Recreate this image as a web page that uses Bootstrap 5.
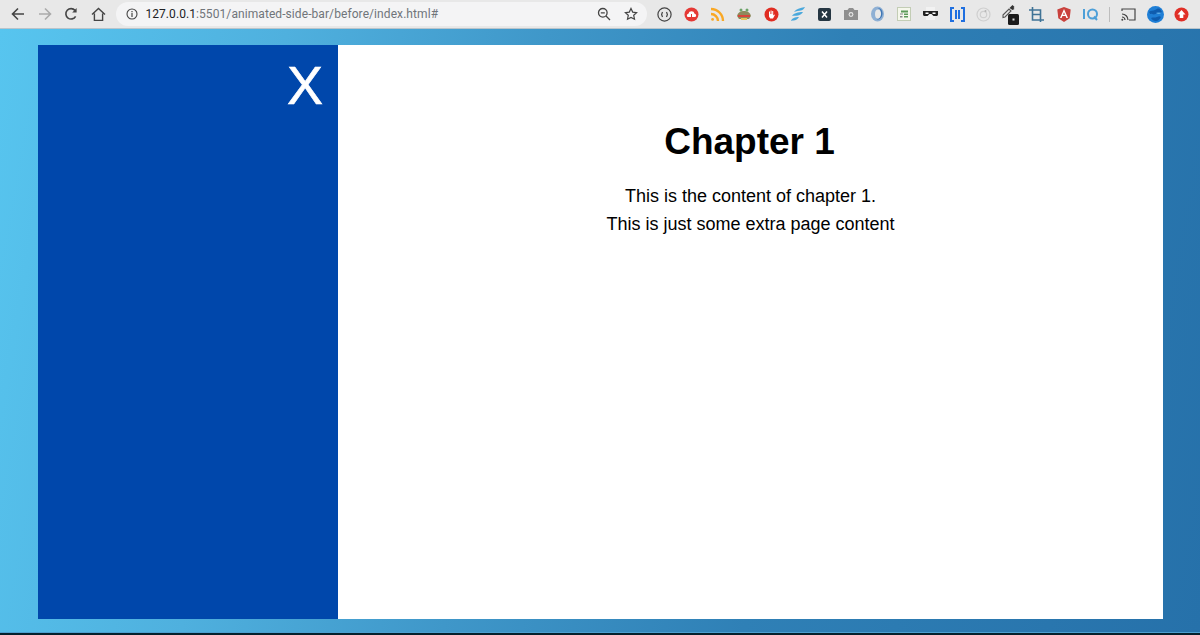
<!DOCTYPE html>
<html lang="en">

<head>
    <meta charset="UTF-8" />
    <meta name="viewport" content="width=device-width, initial-scale=1" />
    <title>Animated side bar</title>
    <link href="https://cdn.jsdelivr.net/npm/bootstrap@5.3.3/dist/css/bootstrap.min.css" rel="stylesheet" />
    <style>
        html,
        body {
            height: 635px;
            overflow: hidden;
        }

        body {
            font-family: "Liberation Sans", Arial, sans-serif;
            background: #04202c;
        }

        .chrome-bar {
            height: 29px;
            background: #e8e8e8;
            border-bottom: 1px solid #b9c4cb;
            padding-left: 5px;
        }

        .tool-slot {
            width: 26.6px;
            height: 28px;
            flex: none;
        }

        .url-pill {
            width: 531px;
            height: 24px;
            margin-left: 5px;
            margin-right: 4px;
            padding-left: 10px;
            padding-right: 3px;
            border-radius: 12px;
            background: #f4f4f5;
            flex: none;
        }

        .url-text {
            font-family: Roboto, "Liberation Sans", sans-serif;
            font-size: 12px;
            letter-spacing: .08px;
            color: #70757a;
            margin-left: 7px;
            white-space: nowrap;
        }

        .url-host {
            color: #202124;
        }

        .bar-sep {
            width: 1px;
            height: 15px;
            background: #bdbdbd;
            margin: 0 5px 0 6px;
            flex: none;
        }

        .page-bg {
            height: 604px;
            padding: 16px 37px 14px 38px;
            background: linear-gradient(100deg, #57c5ef 0%, #4fb0de 22%, #3f97c9 42%, #2f80b6 65%, #2671aa 100%);
            border-bottom: 1px solid #4b9fd0;
        }

        .frame-box {
            height: 574px;
        }

        .side-panel {
            width: 300px;
            background: #0047ab;
            flex: none;
        }

        .close-x {
            color: #fff;
            font-size: 54px;
            line-height: 1;
            padding: 13px 15px 0 0;
            text-decoration: none;
            -webkit-text-stroke: .6px #fff;
        }

        .main-pane {
            background: #fff;
            padding-top: 73px;
        }

        .main-pane h1 {
            font-size: 37px;
            font-weight: 700;
            line-height: 48px;
            margin-bottom: 16px;
            margin-right: 2px;
            color: #000;
        }

        .main-pane p {
            font-size: 18px;
            line-height: 28px;
            margin-bottom: 0;
            color: #000;
        }
    </style>
</head>

<body>
    <div class="chrome-bar d-flex align-items-center">
        <div class="tool-slot d-flex align-items-center justify-content-center">
            <svg width="16" height="16" viewBox="0 0 16 16" fill="none" stroke="#444" stroke-width="1.6"><path d="M14 8H2.5M8 2.5 2.5 8 8 13.5" /></svg>
        </div>
        <div class="tool-slot d-flex align-items-center justify-content-center">
            <svg width="16" height="16" viewBox="0 0 16 16" fill="none" stroke="#aaa" stroke-width="1.6"><path d="M2 8h11.5M8 2.5 13.5 8 8 13.5" /></svg>
        </div>
        <div class="tool-slot d-flex align-items-center justify-content-center">
            <svg width="14" height="14" viewBox="0 0 14 14" fill="none" stroke="#444" stroke-width="1.6"><path d="M11.6 9.4A5.2 5.2 0 1 1 11 3.4" /><path d="M12.6 1v4.4H8.2" fill="#444" stroke="none" /></svg>
        </div>
        <div class="tool-slot d-flex align-items-center justify-content-center">
            <svg width="15" height="15" viewBox="0 0 15 15" fill="none" stroke="#444" stroke-width="1.4"><path d="M1 7.6 7.5 1.5 14 7.6M3.4 6.4v7h8.2v-7" /></svg>
        </div>
        <div class="url-pill d-flex align-items-center">
            <svg width="12" height="12" viewBox="0 0 12 12" class="flex-shrink-0"><circle cx="6" cy="6" r="5" fill="none" stroke="#444" stroke-width="1.1" /><path d="M5.4 5h1.2v4H5.4zM5.4 3h1.2v1.2H5.4z" fill="#444" /></svg>
            <span class="url-text"><span class="url-host">127.0.0.1</span>:5501/animated-side-bar/before/index.html#</span>
            <div class="ms-auto d-flex align-items-center">
                <div class="tool-slot d-flex align-items-center justify-content-center">
                    <svg width="14" height="14" viewBox="0 0 14 14" fill="none" stroke="#444" stroke-width="1.3"><circle cx="5.8" cy="5.8" r="4.3" /><path d="M3.8 5.8h4M9 9l4 4" /></svg>
                </div>
                <div class="tool-slot d-flex align-items-center justify-content-center">
                    <svg width="14" height="14" viewBox="0 0 14 14" fill="none" stroke="#444" stroke-width="1.2"><path d="m7 1.5 1.7 3.6 3.9.5-2.9 2.7.8 3.9L7 10.4l-3.5 1.8.8-3.9-2.9-2.7 3.9-.5z" /></svg>
                </div>
            </div>
        </div>
        <div class="d-flex align-items-center">
            <div class="tool-slot d-flex align-items-center justify-content-center">
                <svg width="15" height="15" viewBox="0 0 15 15" fill="none" stroke="#444" stroke-width="1.2"><circle cx="7.5" cy="7.5" r="6.6" /><path d="M5.5 5 4.6 7.5l.9 2.5M9.5 5l.9 2.5-.9 2.5" /></svg>
            </div>
            <div class="tool-slot d-flex align-items-center justify-content-center">
                <svg width="15" height="15" viewBox="0 0 15 15"><circle cx="7.5" cy="7.5" r="7" fill="#e53935" /><path d="M4 10a1.7 1.7 0 0 1 .4-3.3 3.2 3.2 0 0 1 6.2 0A1.7 1.7 0 0 1 11 10z" fill="#fff" /><path d="M7 7h1v3.500H7z" fill="#e53935" /></svg>
            </div>
            <div class="tool-slot d-flex align-items-center justify-content-center">
                <svg width="15" height="15" viewBox="0 0 15 15" fill="none" stroke="#f9a825" stroke-width="2.4"><path d="M1 7a7 7 0 0 1 7 7M1 2a12 12 0 0 1 12 12" /><circle cx="2.6" cy="12.4" r="1.4" fill="#f9a825" stroke="none" /></svg>
            </div>
            <div class="tool-slot d-flex align-items-center justify-content-center">
                <svg width="16" height="15" viewBox="0 0 16 15"><path d="M1 9c1-4 4-5 7-5s6 1 7 5l-2 3H3z" fill="#8d8a5c" /><path d="M2 8h12v2H2z" fill="#d8453a" /><circle cx="5" cy="3" r="1.5" fill="#6ba368" /><circle cx="11" cy="3" r="1.5" fill="#6ba368" /><path d="M5 11h6v2H5z" fill="#e6c65a" /></svg>
            </div>
            <div class="tool-slot d-flex align-items-center justify-content-center">
                <svg width="15" height="15" viewBox="0 0 15 15"><circle cx="7.5" cy="7.5" r="7" fill="#e02d22" /><path d="M5 7V4.500h1V7h.6V3.500h1V7h.6V4h1v4.500l1-1 .7.6-1.900 3.400H6.200L5 9.500z" fill="#fff" /></svg>
            </div>
            <div class="tool-slot d-flex align-items-center justify-content-center">
                <svg width="16" height="14" viewBox="0 0 16 14" fill="#4aa8dc"><path d="M4 5C6 2 10 1 15 0c-1 2-2 3-4 3.500C9 4 6 4 4 5zM2 9c2-3 6-4 11-4-1 2-3 3-5 3.400C6 8.700 4 8.500 2 9zM1 14c1-3 4-4 8-4-1 2-3 3-4 3.300-2 .4-3 .2-4 .7z" /></svg>
            </div>
            <div class="tool-slot d-flex align-items-center justify-content-center">
                <svg width="13" height="13" viewBox="0 0 13 13"><rect width="13" height="13" rx="2" fill="#253642" /><path d="m4 3.500 5 6M9 3.500l-5 6" stroke="#fff" stroke-width="1.500" /></svg>
            </div>
            <div class="tool-slot d-flex align-items-center justify-content-center">
                <svg width="14" height="12" viewBox="0 0 14 12"><path d="M0 2h3.500L5 0h4l1.500 2H14v10H0z" fill="#8f8f8f" /><circle cx="7" cy="6.500" r="2.400" fill="#e8e8e8" /><circle cx="7" cy="6.500" r="1.300" fill="#8f8f8f" /></svg>
            </div>
            <div class="tool-slot d-flex align-items-center justify-content-center">
                <svg width="15" height="16" viewBox="0 0 14 16"><ellipse cx="7" cy="8" rx="6.500" ry="7.500" fill="#8fb0d4" /><ellipse cx="7.500" cy="8" rx="3" ry="4.500" fill="#e8e8e8" /><path d="M7 2c3 1 4 4 3.500 7S8 13 6 14c2 0 6-2 6-6.500S9 2 7 2z" fill="#3f76b5" /></svg>
            </div>
            <div class="tool-slot d-flex align-items-center justify-content-center">
                <svg width="14" height="14" viewBox="0 0 14 14"><rect x=".5" y=".5" width="13" height="13" fill="#f5f7ec" stroke="#c3cdb5" /><path d="M4 3.500h7v2H4zM7 6.500h4v1.500H7zM7 9h4v1.500H7z" fill="#5c9a58" /><path d="M3 6.500h3v1H3zM3 9h2.500v1.500H3z" fill="#888" /></svg>
            </div>
            <div class="tool-slot d-flex align-items-center justify-content-center">
                <svg width="15" height="14" viewBox="0 0 15 14"><path d="M3 0h9v13H3z" fill="#f2f2f2" /><path d="M0 4h15v3.500c0 1-1 1.500-2 1.500h-2.500L8.500 7h-2L4.500 9H2C1 9 0 8.500 0 7.500z" fill="#222" /><path d="M2.500 5.500h3v1.500h-3zM9.500 5.500h3v1.500h-3z" fill="#fff" /></svg>
            </div>
            <div class="tool-slot d-flex align-items-center justify-content-center">
                <svg width="15" height="15" viewBox="0 0 15 15" fill="none" stroke="#1f6fe0" stroke-width="2"><path d="M4 1H1v13h3M11 1h3v13h-3M6 3v9M9 3v9" /></svg>
            </div>
            <div class="tool-slot d-flex align-items-center justify-content-center">
                <svg width="15" height="15" viewBox="0 0 15 15" fill="none" stroke="#cfcfcf" stroke-width="1.200"><circle cx="7.500" cy="7.500" r="6.500" /><circle cx="7.500" cy="7.500" r="3.200" /><circle cx="9.500" cy="4" r="1" fill="#b5b5b5" stroke="none" /></svg>
            </div>
            <div class="tool-slot d-flex align-items-center justify-content-center">
                <svg width="17" height="22" viewBox="0 0 17 22"><path d="m1 12 6-6 2 2-6 6-2 .5z" fill="none" stroke="#555" stroke-width="1.100" /><path d="m7.500 5 2-2 1-1 2 2-1 1 1 1-2 1z" fill="#333" /><rect x="6" y="11" width="11" height="11" rx="1.500" fill="#1b1b1b" /><rect x="10.500" y="15.500" width="2" height="2" fill="#ddd" /></svg>
            </div>
            <div class="tool-slot d-flex align-items-center justify-content-center">
                <svg width="15" height="15" viewBox="0 0 15 15" fill="none" stroke="#3f7396" stroke-width="1.600"><path d="M3.500 0v13H15M0 3h11.500v12M3.500 7.500h8" /></svg>
            </div>
            <div class="tool-slot d-flex align-items-center justify-content-center">
                <svg width="14" height="15" viewBox="0 0 14 15"><path d="M7 0 .3 2.400 1.300 11.300 7 15l5.700-3.700 1-8.900z" fill="#c9413d" /><path d="M7 2 3 11h1.600l.8-2h3.200l.8 2H11zM6 7.700 7 5.200l1 2.500z" fill="#fff" /></svg>
            </div>
            <div class="tool-slot d-flex align-items-center justify-content-center">
                <svg width="17" height="13" viewBox="0 0 17 13" fill="none" stroke="#4d9fd8" stroke-width="2"><path d="M2 1v10" /><circle cx="10.500" cy="6" r="4.500" /><path d="m12 8.500 3 3.500" /></svg>
            </div>
            <div class="bar-sep"></div>
            <div class="tool-slot d-flex align-items-center justify-content-center">
                <svg width="15" height="13" viewBox="0 0 15 13" fill="none" stroke="#444" stroke-width="1.200"><path d="M1 3V1h13v11H8M1 6a6 6 0 0 1 6 6M1 9a3 3 0 0 1 3 3" /><circle cx="1.300" cy="11.700" r="1" fill="#444" stroke="none" /></svg>
            </div>
            <div class="tool-slot d-flex align-items-center justify-content-center">
                <svg width="17" height="17" viewBox="0 0 17 17"><circle cx="8.500" cy="8.500" r="8.500" fill="#1f7fd6" /><path d="M2 6c2-2 4-1 6-2s3-2 5-1l2 3c-2 1-4 0-5 1S7 9 5 8 3 8 2 6zM4 12c2-1 4 0 6-1s3-1 4 0c-1 2-3 4-5 4s-4-1-5-3z" fill="#0f5cae" /><path d="M9 7c1-.5 3-.5 5 0-1 1-3 1-5 0z" fill="#7cc2ee" /></svg>
            </div>
            <div class="tool-slot d-flex align-items-center justify-content-center">
                <svg width="15" height="15" viewBox="0 0 15 15"><circle cx="7.500" cy="7.500" r="7" fill="#e02f27" /><path d="M7.500 3 3.500 7.500h2.200V11h3.600V7.500h2.200z" fill="#fff" /></svg>
            </div>
        </div>
    </div>

    <div class="page-bg">
        <div class="frame-box d-flex">
            <div class="side-panel d-flex justify-content-end align-items-start">
                <a href="#" class="close-x">X</a>
            </div>
            <div class="main-pane flex-grow-1 text-center">
                <h1>Chapter 1</h1>
                <p>This is the content of chapter 1.</p>
                <p>This is just some extra page content</p>
            </div>
        </div>
    </div>

    <script src="https://cdn.jsdelivr.net/npm/bootstrap@5.3.3/dist/js/bootstrap.bundle.min.js"></script>
</body>

</html>
